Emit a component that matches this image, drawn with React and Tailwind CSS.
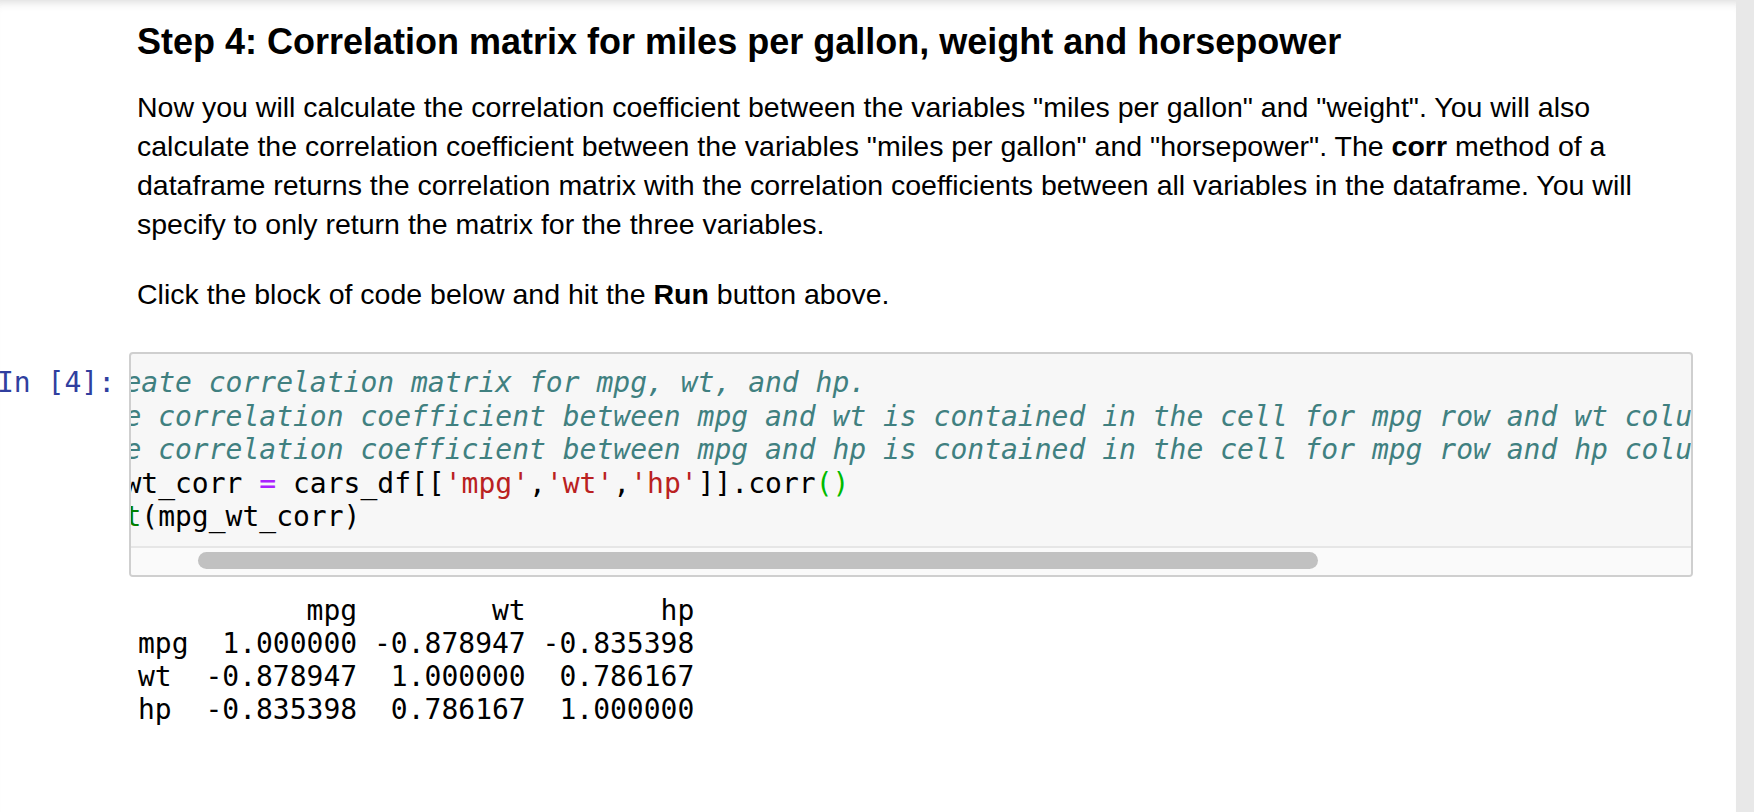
import React from "react";

const sans = "font-['Liberation_Sans',Arial,sans-serif]";
const mono = "font-['DejaVu_Sans_Mono',Menlo,monospace]";

function CodeLine({ children }) {
  return <div className="whitespace-pre h-[33.5px] leading-[33.5px]">{children}</div>;
}

export default function App() {
  const output = [
    "          mpg        wt        hp",
    "mpg  1.000000 -0.878947 -0.835398",
    "wt  -0.878947  1.000000  0.786167",
    "hp  -0.835398  0.786167  1.000000",
  ];

  return (
    <div className="flex min-h-[812px] w-full bg-white text-black">
      <main className="flex-1 min-w-0 shadow-[inset_0_10px_10px_-8px_rgba(87,87,87,0.22)]">
        {/* Markdown cell */}
        <div className={`${sans} pl-[137px] pr-[56px] pt-[22px]`}>
          <h3 className="text-[36px] leading-[40px] font-bold">
            Step 4: Correlation matrix for miles per gallon, weight and horsepower
          </h3>
          <p className="mt-[26px] text-[28.5px] leading-[39px]">
            Now you will calculate the correlation coefficient between the variables "miles per
            gallon" and "weight". You will also calculate the correlation coefficient between the
            variables "miles per gallon" and "horsepower". The <b>corr</b> method of a dataframe
            returns the correlation matrix with the correlation coefficients between all variables in
            the dataframe. You will specify to only return the matrix for the three variables.
          </p>
          <p className="mt-[31px] text-[28.5px] leading-[39px]">
            Click the block of code below and hit the <b>Run</b> button above.
          </p>
        </div>

        {/* Code cell */}
        <div className={`${mono} mt-[38px] flex text-[28px]`}>
          <div className="w-[129px] shrink-0 flex justify-end pr-[14px] pt-[14px] overflow-visible">
            <span className="whitespace-pre leading-[33.5px] text-[#303F9F]">In [4]:</span>
          </div>
          <div className="w-[1564px] h-[225px] shrink-0 border-2 border-[#cfcfcf] rounded-[4px] bg-[#f7f7f7] overflow-hidden flex flex-col">
            <div className="h-[192px] pt-[12px] overflow-hidden">
              <div className="ml-[-74px]">
                <CodeLine>
                  <span className="italic text-[#408080]"># Create correlation matrix for mpg, wt, and hp.</span>
                </CodeLine>
                <CodeLine>
                  <span className="italic text-[#408080]">
                    # The correlation coefficient between mpg and wt is contained in the cell for mpg row and wt column.
                  </span>
                </CodeLine>
                <CodeLine>
                  <span className="italic text-[#408080]">
                    # The correlation coefficient between mpg and hp is contained in the cell for mpg row and hp column.
                  </span>
                </CodeLine>
                <CodeLine>
                  mpg_wt_corr <span className="text-[#AA22FF]">=</span> cars_df[[
                  <span className="text-[#BA2121]">'mpg'</span>,<span className="text-[#BA2121]">'wt'</span>,
                  <span className="text-[#BA2121]">'hp'</span>]].corr<span className="text-[#00bb00]">()</span>
                </CodeLine>
                <CodeLine>
                  <span className="text-[#008000]">print</span>(mpg_wt_corr)
                </CodeLine>
              </div>
            </div>
            <div className="flex-1 border-t-2 border-[#e6e6e6] bg-[#fafafa]">
              <div className="ml-[67px] mt-[4px] w-[1120px] h-[17px] rounded-full bg-[#c1c1c1]" />
            </div>
          </div>
        </div>

        {/* Output */}
        <pre className={`${mono} ml-[138px] mt-[17px] text-[28px] leading-[33px]`}>
          {output.join("\n")}
        </pre>
      </main>
      <div className="w-[18px] shrink-0 bg-[#e8e8e8]" />
    </div>
  );
}
